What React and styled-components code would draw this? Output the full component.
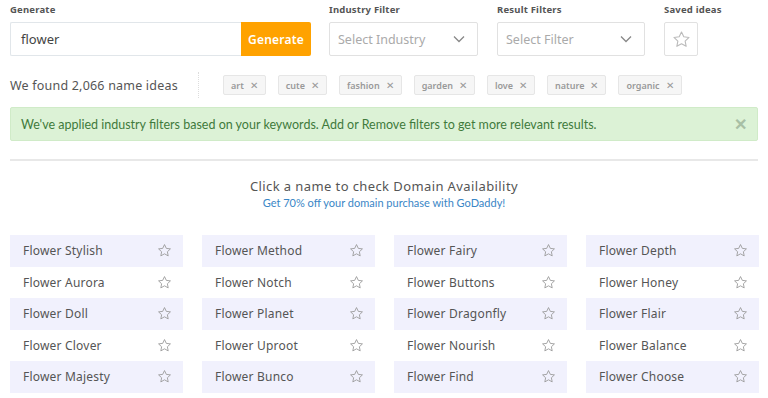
import React from 'react';
import styled, { createGlobalStyle } from 'styled-components';

const GlobalStyle = createGlobalStyle`
  body {
    margin: 0;
    background: #fff;
    font-family: "Noto Sans", "Open Sans", sans-serif;
    color: #555;
  }
  * { box-sizing: border-box; }
`;

const Page = styled.div`
  width: 768px;
  padding: 4px 10px 0;
`;

const TopBar = styled.div`
  display: flex;
  align-items: flex-start;
`;

const Field = styled.div`
  display: flex;
  flex-direction: column;
  width: ${(p) => p.width}px;
  margin-right: ${(p) => p.gap || 0}px;
`;

const Label = styled.div`
  font-size: 9.5px;
  font-weight: 700;
  color: #555;
  height: 18px;
  line-height: 12px;
  letter-spacing: 0.2px;
`;

const SearchBox = styled.div`
  display: flex;
  height: 34px;
`;

const Input = styled.div`
  flex: 1;
  border: 1px solid #e1e6ea;
  border-right: none;
  border-radius: 2px 0 0 2px;
  padding: 0 10px;
  display: flex;
  align-items: center;
  font-size: 13px;
  color: #444;
`;

const GenerateButton = styled.button`
  width: 70px;
  border: none;
  background: #ffa200;
  color: #fff;
  font-family: inherit;
  font-size: 12px;
  font-weight: 600;
  border-radius: 0 2px 2px 0;
  letter-spacing: 0.2px;
`;

const Select = styled.div`
  height: 34px;
  border: 1px solid #e1e1e1;
  border-radius: 2px;
  display: flex;
  align-items: center;
  justify-content: space-between;
  padding: 0 12px 0 8px;
  font-size: 12.5px;
  color: #aaa;
`;

const SavedBox = styled.div`
  width: 34px;
  height: 34px;
  border: 1px solid #e1e1e1;
  border-radius: 2px;
  display: flex;
  align-items: center;
  justify-content: center;
`;

const InfoRow = styled.div`
  display: flex;
  align-items: center;
  margin-top: 16px;
  height: 26px;
`;

const Count = styled.div`
  width: 188px;
  font-size: 12.5px;
  color: #555;
  letter-spacing: 0.2px;
`;

const Separator = styled.div`
  width: 0;
  height: 26px;
  border-left: 1px dotted #ddd;
  margin-right: 24px;
`;

const Tags = styled.div`
  display: flex;
  gap: 12px;
`;

const Tag = styled.div`
  height: 20px;
  padding: 0 7px;
  display: flex;
  align-items: center;
  gap: 6px;
  background: #f6f6f6;
  border: 1px solid #e6e6e6;
  border-radius: 2px;
  font-size: 9px;
  font-weight: 600;
  color: #999;
  span { font-weight: 400; font-size: 10px; }
`;

const Alert = styled.div`
  margin-top: 9px;
  height: 34px;
  background: #dcf2d6;
  border: 1px solid #d0ebc8;
  border-radius: 2px;
  display: flex;
  align-items: center;
  justify-content: space-between;
  padding: 0 10px;
  font-family: "Lato", sans-serif;
  font-size: 12.5px;
  color: #3f7a3c;
`;

const Close = styled.span`
  font-size: 16px;
  font-weight: 700;
  color: #a8bfa5;
`;

const Divider = styled.hr`
  margin: 18px 0 0;
  border: none;
  border-top: 2px solid #e8e8e8;
`;

const Heading = styled.div`
  text-align: center;
  margin-top: 16px;
  font-size: 13px;
  color: #555;
  letter-spacing: 0.4px;
`;

const Promo = styled.div`
  text-align: center;
  margin-top: 1px;
  font-family: "Lato", sans-serif;
  font-size: 11px;
  color: #3a86c6;
`;

const Grid = styled.div`
  display: grid;
  grid-template-columns: repeat(4, 173px);
  column-gap: 19px;
  margin-top: 26px;
`;

const Column = styled.div`
  display: flex;
  flex-direction: column;
`;

const NameRow = styled.div`
  height: 31.5px;
  display: flex;
  align-items: center;
  justify-content: space-between;
  padding: 0 11px 0 13px;
  background: ${(p) => (p.shaded ? '#f1f1fd' : '#fff')};
  font-size: 12px;
  color: #555;
  letter-spacing: 0.2px;
`;

const Star = ({ size = 15, color = '#999' }) => (
  <svg width={size} height={size} viewBox="0 0 24 24" fill="none" stroke={color} strokeWidth="1.4" strokeLinejoin="round">
    <path d="M12 2.5l2.9 6.1 6.6.8-4.9 4.6 1.3 6.6L12 17.3l-5.9 3.3 1.3-6.6-4.9-4.6 6.6-.8z" />
  </svg>
);

const Chevron = () => (
  <svg width="12" height="8" viewBox="0 0 12 8" fill="none" stroke="#888" strokeWidth="1.3">
    <path d="M1 1.5l5 5 5-5" />
  </svg>
);

const tags = ['art', 'cute', 'fashion', 'garden', 'love', 'nature', 'organic'];

const columns = [
  ['Stylish', 'Aurora', 'Doll', 'Clover', 'Majesty'],
  ['Method', 'Notch', 'Planet', 'Uproot', 'Bunco'],
  ['Fairy', 'Buttons', 'Dragonfly', 'Nourish', 'Find'],
  ['Depth', 'Honey', 'Flair', 'Balance', 'Choose'],
];

const App = () => (
  <Page>
    <GlobalStyle />
    <TopBar>
      <Field width={301} gap={18}>
        <Label>Generate</Label>
        <SearchBox>
          <Input>flower</Input>
          <GenerateButton>Generate</GenerateButton>
        </SearchBox>
      </Field>
      <Field width={149} gap={19}>
        <Label>Industry Filter</Label>
        <Select>
          Select Industry
          <Chevron />
        </Select>
      </Field>
      <Field width={148} gap={19}>
        <Label>Result Filters</Label>
        <Select>
          Select Filter
          <Chevron />
        </Select>
      </Field>
      <Field width={80}>
        <Label>Saved ideas</Label>
        <SavedBox>
          <Star size={19} color="#bbb" />
        </SavedBox>
      </Field>
    </TopBar>

    <InfoRow>
      <Count>We found 2,066 name ideas</Count>
      <Separator />
      <Tags>
        {tags.map((t) => (
          <Tag key={t}>
            {t} <span>✕</span>
          </Tag>
        ))}
      </Tags>
    </InfoRow>

    <Alert>
      We've applied industry filters based on your keywords. Add or Remove filters to get more relevant results.
      <Close>✕</Close>
    </Alert>

    <Divider />

    <Heading>Click a name to check Domain Availability</Heading>
    <Promo>Get 70% off your domain purchase with GoDaddy!</Promo>

    <Grid>
      {columns.map((col, ci) => (
        <Column key={ci}>
          {col.map((n, i) => (
            <NameRow key={n} shaded={i % 2 === 0}>
              Flower {n}
              <Star />
            </NameRow>
          ))}
        </Column>
      ))}
    </Grid>
  </Page>
);

export default App;
